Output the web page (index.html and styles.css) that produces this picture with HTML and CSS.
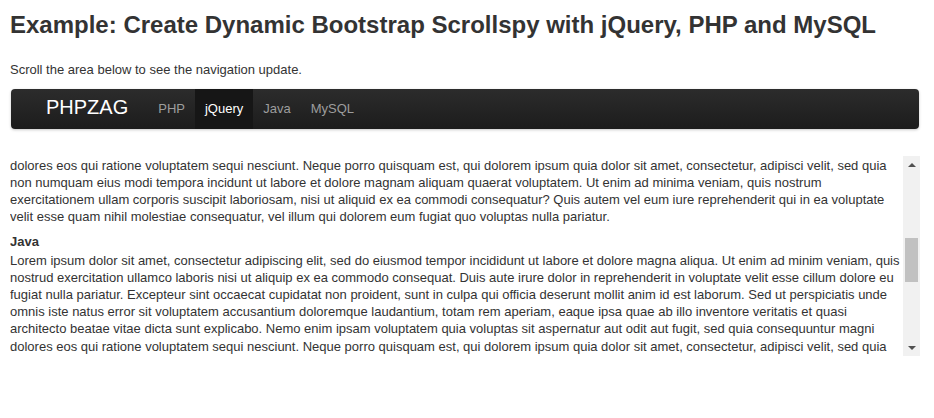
FILE: index.html
```html
<!DOCTYPE html>
<html lang="en">
<head>
<meta charset="utf-8">
<title>Dynamic Bootstrap Scrollspy</title>
<link rel="stylesheet" href="styles.css">
</head>
<body>
<div class="page">
  <h1 class="title">Example: Create Dynamic Bootstrap Scrollspy with jQuery, PHP and MySQL</h1>
  <p class="intro">Scroll the area below to see the navigation update.</p>

  <nav class="navbar">
    <a class="brand" href="#">PHPZAG</a>
    <ul class="nav">
      <li><a href="#php">PHP</a></li>
      <li class="active"><a href="#jquery">jQuery</a></li>
      <li><a href="#java">Java</a></li>
      <li><a href="#mysql">MySQL</a></li>
    </ul>
  </nav>

  <div class="spy-box">
    <div class="spy-content">
      <section class="topic">
        <h4 id="php">PHP</h4>
        <p>Lorem ipsum dolor sit amet, consectetur adipiscing elit, sed do eiusmod tempor incididunt ut labore et dolore magna aliqua. Ut enim ad minim veniam, quis nostrud exercitation ullamco laboris nisi ut aliquip ex ea commodo consequat. Duis aute irure dolor in reprehenderit in voluptate velit esse cillum dolore eu fugiat nulla pariatur. Excepteur sint occaecat cupidatat non proident, sunt in culpa qui officia deserunt mollit anim id est laborum. Sed ut perspiciatis unde omnis iste natus error sit voluptatem accusantium doloremque laudantium, totam rem aperiam, eaque ipsa quae ab illo inventore veritatis et quasi architecto beatae vitae dicta sunt explicabo. Nemo enim ipsam voluptatem quia voluptas sit aspernatur aut odit aut fugit, sed quia consequuntur magni dolores eos qui ratione voluptatem sequi nesciunt. Neque porro quisquam est, qui dolorem ipsum quia dolor sit amet, consectetur, adipisci velit, sed quia non numquam eius modi tempora incidunt ut labore et dolore magnam aliquam quaerat voluptatem. Ut enim ad minima veniam, quis nostrum exercitationem ullam corporis suscipit laboriosam, nisi ut aliquid ex ea commodi consequatur? Quis autem vel eum iure reprehenderit qui in ea voluptate velit esse quam nihil molestiae consequatur, vel illum qui dolorem eum fugiat quo voluptas nulla pariatur.</p>
      </section>
      <section class="topic">
        <h4 id="jquery">jQuery</h4>
        <p>Lorem ipsum dolor sit amet, consectetur adipiscing elit, sed do eiusmod tempor incididunt ut labore et dolore magna aliqua. Ut enim ad minim veniam, quis nostrud exercitation ullamco laboris nisi ut aliquip ex ea commodo consequat. Duis aute irure dolor in reprehenderit in voluptate velit esse cillum dolore eu fugiat nulla pariatur. Excepteur sint occaecat cupidatat non proident, sunt in culpa qui officia deserunt mollit anim id est laborum. Sed ut perspiciatis unde omnis iste natus error sit voluptatem accusantium doloremque laudantium, totam rem aperiam, eaque ipsa quae ab illo inventore veritatis et quasi architecto beatae vitae dicta sunt explicabo. Nemo enim ipsam voluptatem quia voluptas sit aspernatur aut odit aut fugit, sed quia consequuntur magni dolores eos qui ratione voluptatem sequi nesciunt. Neque porro quisquam est, qui dolorem ipsum quia dolor sit amet, consectetur, adipisci velit, sed quia non numquam eius modi tempora incidunt ut labore et dolore magnam aliquam quaerat voluptatem. Ut enim ad minima veniam, quis nostrum exercitationem ullam corporis suscipit laboriosam, nisi ut aliquid ex ea commodi consequatur? Quis autem vel eum iure reprehenderit qui in ea voluptate velit esse quam nihil molestiae consequatur, vel illum qui dolorem eum fugiat quo voluptas nulla pariatur.</p>
      </section>
      <section class="topic">
        <h4 id="java">Java</h4>
        <p>Lorem ipsum dolor sit amet, consectetur adipiscing elit, sed do eiusmod tempor incididunt ut labore et dolore magna aliqua. Ut enim ad minim veniam, quis nostrud exercitation ullamco laboris nisi ut aliquip ex ea commodo consequat. Duis aute irure dolor in reprehenderit in voluptate velit esse cillum dolore eu fugiat nulla pariatur. Excepteur sint occaecat cupidatat non proident, sunt in culpa qui officia deserunt mollit anim id est laborum. Sed ut perspiciatis unde omnis iste natus error sit voluptatem accusantium doloremque laudantium, totam rem aperiam, eaque ipsa quae ab illo inventore veritatis et quasi architecto beatae vitae dicta sunt explicabo. Nemo enim ipsam voluptatem quia voluptas sit aspernatur aut odit aut fugit, sed quia consequuntur magni dolores eos qui ratione voluptatem sequi nesciunt. Neque porro quisquam est, qui dolorem ipsum quia dolor sit amet, consectetur, adipisci velit, sed quia non numquam eius modi tempora incidunt ut labore et dolore magnam aliquam quaerat voluptatem. Ut enim ad minima veniam, quis nostrum exercitationem ullam corporis suscipit laboriosam, nisi ut aliquid ex ea commodi consequatur? Quis autem vel eum iure reprehenderit qui in ea voluptate velit esse quam nihil molestiae consequatur, vel illum qui dolorem eum fugiat quo voluptas nulla pariatur.</p>
      </section>
      <section class="topic">
        <h4 id="mysql">MySQL</h4>
        <p>Lorem ipsum dolor sit amet, consectetur adipiscing elit, sed do eiusmod tempor incididunt ut labore et dolore magna aliqua. Ut enim ad minim veniam, quis nostrud exercitation ullamco laboris nisi ut aliquip ex ea commodo consequat. Duis aute irure dolor in reprehenderit in voluptate velit esse cillum dolore eu fugiat nulla pariatur. Excepteur sint occaecat cupidatat non proident, sunt in culpa qui officia deserunt mollit anim id est laborum. Sed ut perspiciatis unde omnis iste natus error sit voluptatem accusantium doloremque laudantium, totam rem aperiam, eaque ipsa quae ab illo inventore veritatis et quasi architecto beatae vitae dicta sunt explicabo. Nemo enim ipsam voluptatem quia voluptas sit aspernatur aut odit aut fugit, sed quia consequuntur magni dolores eos qui ratione voluptatem sequi nesciunt. Neque porro quisquam est, qui dolorem ipsum quia dolor sit amet, consectetur, adipisci velit, sed quia non numquam eius modi tempora incidunt ut labore et dolore magnam aliquam quaerat voluptatem. Ut enim ad minima veniam, quis nostrum exercitationem ullam corporis suscipit laboriosam, nisi ut aliquid ex ea commodi consequatur? Quis autem vel eum iure reprehenderit qui in ea voluptate velit esse quam nihil molestiae consequatur, vel illum qui dolorem eum fugiat quo voluptas nulla pariatur.</p>
      </section>
    </div>
    <div class="scrollbar" aria-hidden="true">
      <span class="sb-btn sb-up"></span>
      <span class="sb-track"><span class="sb-thumb"></span></span>
      <span class="sb-btn sb-down"></span>
    </div>
  </div>
</div>
<script src="script.js"></script>
</body>
</html>
```

FILE: styles.css
```css
* {
  box-sizing: border-box;
}

html,
body {
  margin: 0;
  background: #fff;
}

body {
  font-family: "Liberation Sans", Arial, Helvetica, sans-serif;
  font-size: 13px;
  line-height: 17.2px;
  color: #333;
}

.page {
  width: 934px;
  padding: 12px 14px 0 10px;
}

.title {
  margin: 0 0 22.5px;
  font-size: 24px;
  font-weight: bold;
  line-height: 1.1;
  color: #333;
}

.intro {
  margin: 0 0 11px;
}

/* inverse navbar */
.navbar {
  display: flex;
  height: 40px;
  margin: 0 1px;
  border-radius: 4px;
  background: linear-gradient(to bottom, #2c2c2c 0, #1c1c1c 100%);
  box-shadow: 0 1px 3px rgba(0, 0, 0, .22);
}

.brand {
  height: 40px;
  padding: 0 20px 4px 35px;
  font-size: 20px;
  line-height: 36px;
  color: #fff;
  text-decoration: none;
}

.nav {
  display: flex;
  margin: 0;
  padding: 0;
  list-style: none;
}

.nav a {
  display: block;
  height: 40px;
  padding: 0 10px;
  font-size: 13px;
  line-height: 40px;
  color: #9d9d9d;
  text-decoration: none;
}

.nav .active a {
  color: #fff;
  background: #161616;
}

.spy-box {
  display: flex;
  height: 200px;
  margin-top: 27px;
}

.spy-content {
  flex: 1;
  overflow: hidden;
}

.topic h4 {
  margin: 4px 0 2px;
  font-size: 13px;
  font-weight: bold;
  line-height: 14.3px;
  color: #333;
}

.topic p {
  margin: 0 0 10px;
}

.scrollbar {
  display: flex;
  flex-direction: column;
  width: 17px;
  background: #f1f1f1;
}

.sb-btn {
  display: flex;
  align-items: center;
  justify-content: center;
  height: 17px;
}

.sb-up::before,
.sb-down::before {
  content: "";
  width: 0;
  height: 0;
  border-left: 4px solid transparent;
  border-right: 4px solid transparent;
}

.sb-up::before {
  border-bottom: 4px solid #505050;
}

.sb-down::before {
  border-top: 4px solid #505050;
}

.sb-track {
  flex: 1;
  display: flex;
  flex-direction: column;
}

.sb-thumb {
  height: 44px;
  margin: 65px 2px 0;
  background: #c1c1c1;
}
```

FILE: script.js
```js
// Scroll the spy area so the Java section sits near the middle, as after the user scrolled.
(function () {
  var box = document.querySelector('.spy-content');
  var java = document.getElementById('java');
  var offset = java.getBoundingClientRect().top - box.getBoundingClientRect().top;
  box.scrollTop = Math.round(offset - 79);
})();
```
